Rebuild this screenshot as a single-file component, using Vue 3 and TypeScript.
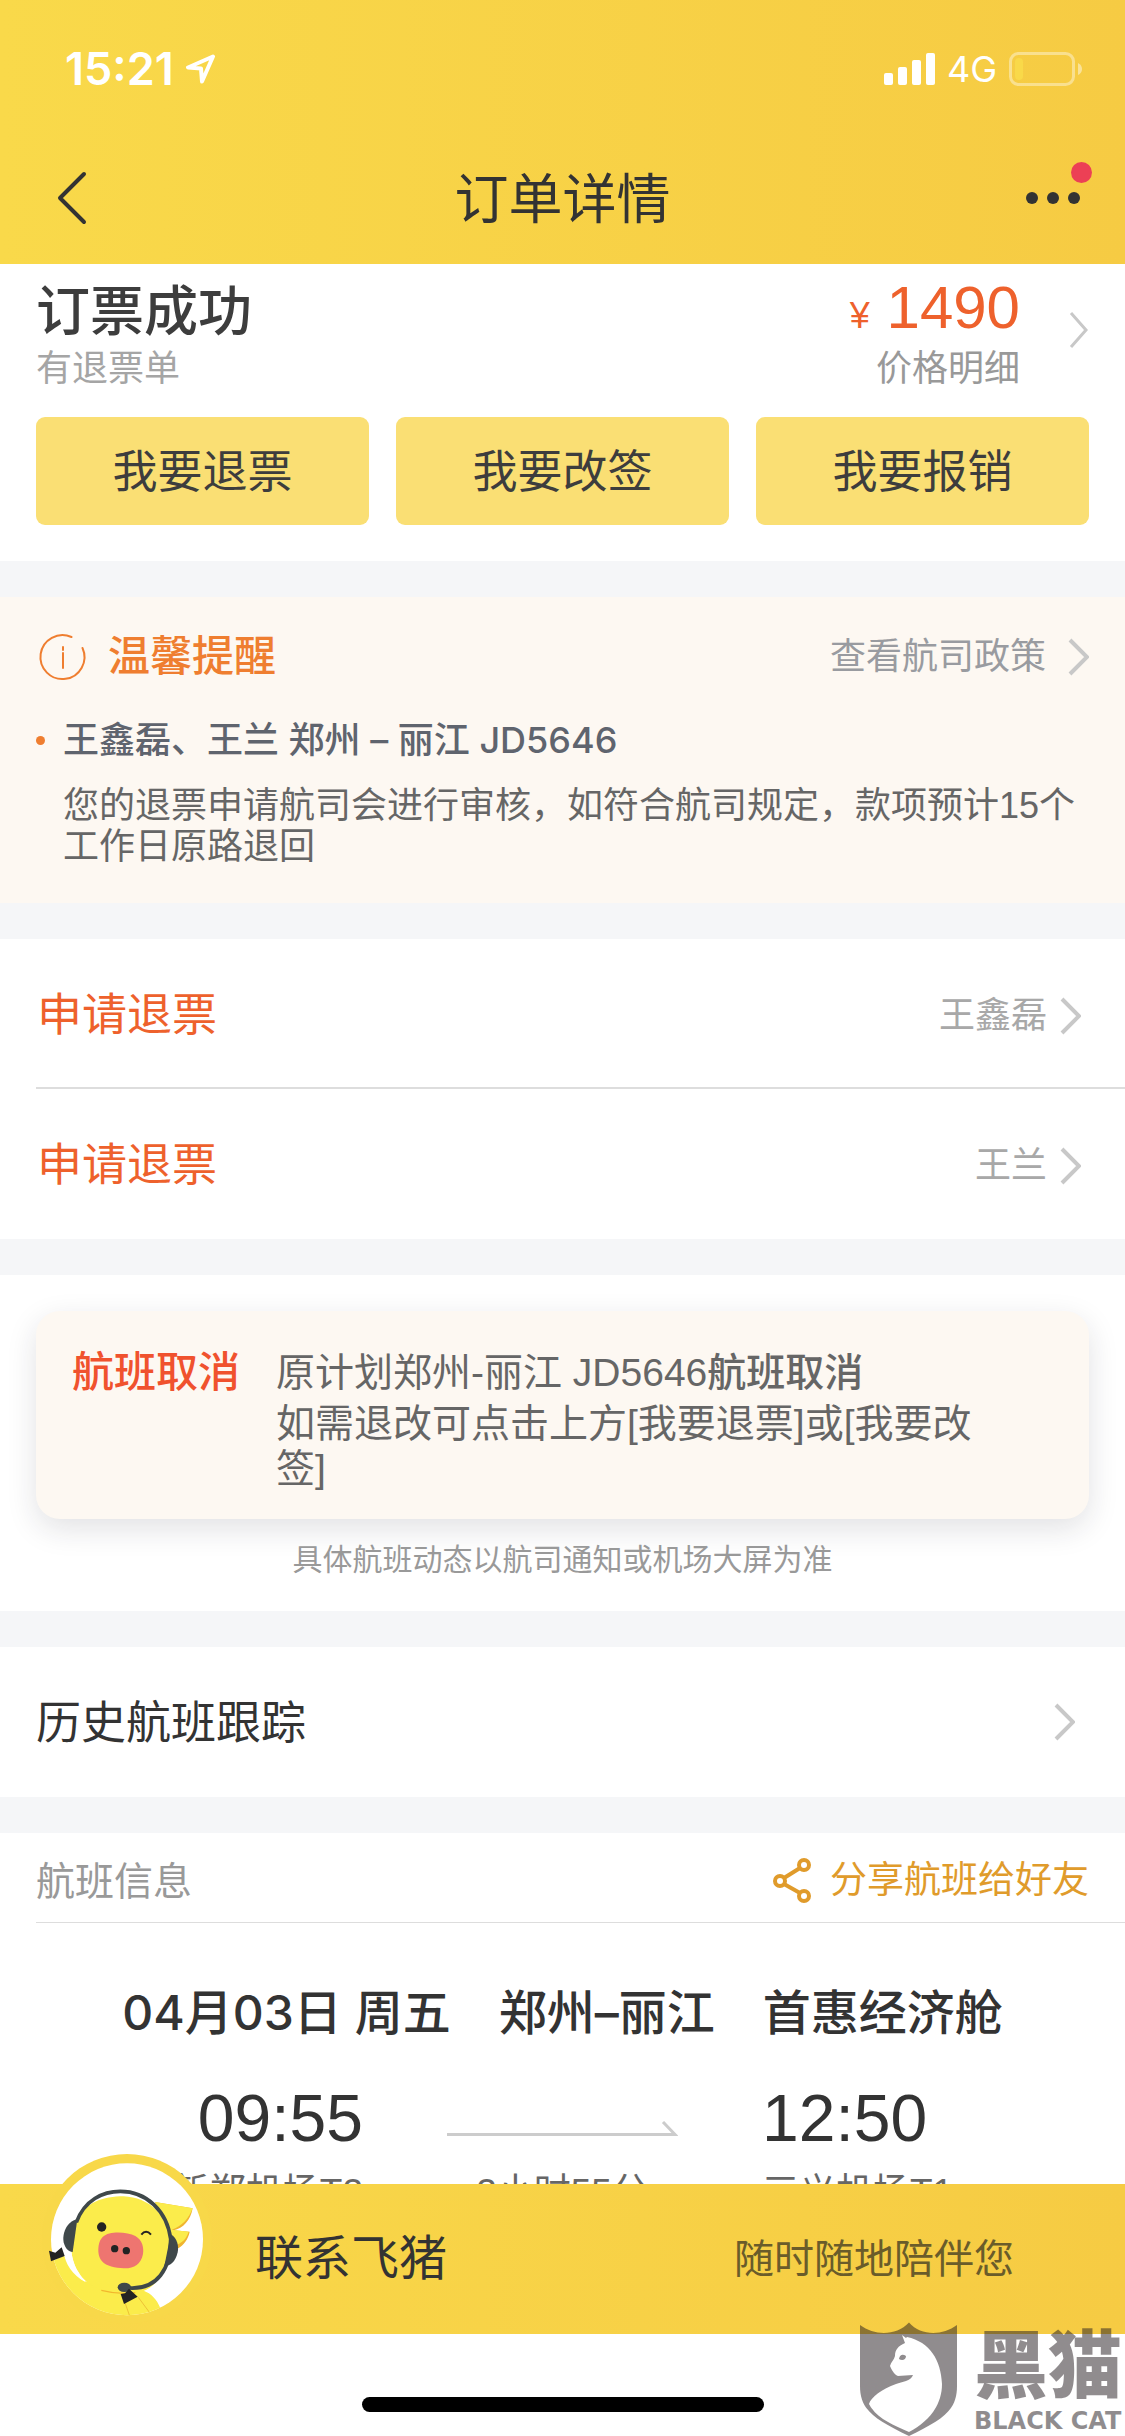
<script setup lang="ts">
interface RefundRow {
  id: number
  title: string
  passenger: string
}

const actions: string[] = ['我要退票', '我要改签', '我要报销']

const refunds: RefundRow[] = [
  { id: 1, title: '申请退票', passenger: '王鑫磊' },
  { id: 2, title: '申请退票', passenger: '王兰' },
]

const flight = {
  date: '04月03日 周五',
  route: '郑州–丽江',
  cabin: '首惠经济舱',
  depart: '09:55',
  arrive: '12:50',
  from: '新郑机场T2',
  to: '三义机场T1',
  duration: '2小时55分',
}
</script>

<template>
  <div class="page">
    <header class="top">
      <div class="status">
        <div class="status-left">
          <span class="clock">15:21</span>
          <svg class="locate" viewBox="0 0 30 30" aria-hidden="true">
            <path d="M27 2.500 L2 13.500 L15 14.500 L16 27.500 Z" />
          </svg>
        </div>
        <div class="status-right">
          <svg class="signal" viewBox="0 0 51 32" aria-hidden="true">
            <rect x="0" y="20" width="9" height="12" rx="2" />
            <rect x="14" y="14" width="9" height="18" rx="2" />
            <rect x="28" y="7" width="9" height="25" rx="2" />
            <rect x="42" y="0" width="9" height="32" rx="2" />
          </svg>
          <span class="network">4G</span>
          <svg class="battery" viewBox="0 0 74 34" aria-hidden="true">
            <rect x="1.500" y="1.500" width="63" height="31" rx="8" fill="none" stroke="#fff" stroke-opacity=".4" stroke-width="3" />
            <rect x="6" y="6" width="8" height="22" rx="4" fill="#f9d949" />
            <path d="M69 11 Q73 13 73 17 Q73 21 69 23 Z" fill="#fff" fill-opacity=".45" />
          </svg>
        </div>
      </div>
      <nav class="nav">
        <button class="icon-btn" type="button" aria-label="返回">
          <svg class="back" viewBox="0 0 30 54" aria-hidden="true">
            <path d="M27 3 L3 27 L27 51" />
          </svg>
        </button>
        <h1>订单详情</h1>
        <button class="icon-btn more" type="button" aria-label="更多">
          <svg class="dots" viewBox="0 0 54 12" aria-hidden="true">
            <circle cx="6" cy="6" r="6" />
            <circle cx="27" cy="6" r="6" />
            <circle cx="48" cy="6" r="6" />
          </svg>
          <span class="badge"></span>
        </button>
      </nav>
    </header>

    <main>
      <section class="order">
        <div class="summary">
          <div class="state">
            <h2>订票成功</h2>
            <p>有退票单</p>
          </div>
          <div class="price">
            <p class="amount"><small>¥</small> 1490</p>
            <p class="detail">价格明细</p>
          </div>
          <svg class="chev thin" viewBox="0 0 22 40" aria-hidden="true"><path d="M4 3 L19 20 L4 37" /></svg>
        </div>
        <div class="actions">
          <button v-for="label in actions" :key="label" type="button">{{ label }}</button>
        </div>
      </section>

      <section class="notice">
        <div class="notice-head">
          <svg class="info" viewBox="0 0 54 54" aria-hidden="true">
            <path d="M35.500 7 A22 22 0 1 0 46.500 18" />
            <path d="M27 17 V20 M27 23 V38" />
          </svg>
          <h3>温馨提醒</h3>
          <a href="#policy">查看航司政策
            <svg class="chev" viewBox="0 0 22 40" aria-hidden="true"><path d="M3 3 L20 20 L3 37" /></svg>
          </a>
        </div>
        <p class="who">王鑫磊、王兰 郑州 – 丽江 JD5646</p>
        <p class="body">您的退票申请航司会进行审核，如符合航司规定，款项预计15个工作日原路退回</p>
      </section>

      <section class="refunds">
        <a v-for="row in refunds" :key="row.id" class="refund" href="#refund">
          <span class="refund-title">{{ row.title }}</span>
          <span class="refund-name">{{ row.passenger }}</span>
          <svg class="chev" viewBox="0 0 22 40" aria-hidden="true"><path d="M3 3 L20 20 L3 37" /></svg>
        </a>
      </section>

      <section class="cancel">
        <div class="card">
          <h3>航班取消</h3>
          <div class="card-text">
            <p class="plan">原计划郑州-丽江 JD5646<b>航班取消</b></p>
            <p>如需退改可点击上方[我要退票]或[我要改签]</p>
          </div>
        </div>
        <p class="caption">具体航班动态以航司通知或机场大屏为准</p>
      </section>

      <a class="history" href="#history">
        <span>历史航班跟踪</span>
        <svg class="chev" viewBox="0 0 22 40" aria-hidden="true"><path d="M3 3 L20 20 L3 37" /></svg>
      </a>

      <section class="flight">
        <div class="flight-head">
          <h3>航班信息</h3>
          <a href="#share">
            <svg class="share" viewBox="0 0 39 45" aria-hidden="true">
              <circle cx="31" cy="7" r="5" />
              <circle cx="7" cy="23" r="5" />
              <circle cx="31" cy="38" r="5" />
              <path d="M27 10 L11 20 M11 26 L27 35" />
            </svg>
            分享航班给好友
          </a>
        </div>
        <div class="trip">
          <span>{{ flight.date }}</span>
          <span>{{ flight.route }}</span>
          <span>{{ flight.cabin }}</span>
        </div>
        <div class="schedule">
          <time class="start">{{ flight.depart }}</time>
          <svg class="arrow" viewBox="0 0 231 15" aria-hidden="true"><path d="M0 13.500 H228 L216 1" /></svg>
          <time>{{ flight.arrive }}</time>
          <span class="place start">{{ flight.from }}</span>
          <span class="place mid">{{ flight.duration }}</span>
          <span class="place">{{ flight.to }}</span>
        </div>
      </section>
    </main>

    <footer class="dock">
      <a class="contact" href="#service">
        <svg class="avatar" viewBox="125 70 510 510" aria-hidden="true">
          <defs>
            <clipPath id="face"><circle cx="380" cy="326" r="228" /></clipPath>
          </defs>
          <circle cx="380" cy="325" r="255" fill="#f8d849" />
          <circle cx="380" cy="326" r="228" fill="#fff" />
          <g clip-path="url(#face)">
            <path d="M464 214 L577 233 C571 268 548 294 520 299 L568 303 C563 328 550 342 534 353 L505 312 Z" fill="#f0b52f" />
            <path d="M464 214 L577 233 C566 262 545 288 514 297 L565 303 C558 324 548 334 530 342 L505 312 Z" fill="#fbec4b" />
            <path d="M140 400 L191 374 C207 410 228 436 252 452 L430 480 C452 488 470 506 480 532 L440 570 H250 L140 470 Z" fill="#fbec4b" />
            <path d="M228 275 C250 215 310 197 370 197 C445 200 506 255 510 330 C510 415 465 490 385 490 C320 490 260 470 235 425 C205 380 208 320 228 275 Z" fill="#fbec4b" />
            <path d="M190 362 C194 400 216 434 255 454 C232 428 219 402 213 364 Z" fill="#fff" />
            <path d="M303 479 Q352 492 405 486" fill="none" stroke="#f2b72e" stroke-width="4" />
            <path d="M374 516 L388 556 M414 500 L448 546" fill="none" stroke="#e5ab2c" stroke-width="2" />
          </g>
          <path d="M228 275 C252 208 308 182 360 182 C438 182 500 240 511 325 C512 415 470 478 385 472" fill="none" stroke="#3f484a" stroke-width="11" />
          <path d="M231 266 C197 273 185 312 190 335 C195 355 205 363 217 364 Z" fill="#3f484a" />
          <path d="M511 311 C531 322 536 347 532 365 C525 395 510 405 492 407 Z" fill="#3f484a" />
          <ellipse cx="372" cy="470" rx="20" ry="14" fill="#3f484a" />
          <circle cx="304" cy="289" r="14" fill="#232323" />
          <path d="M423 312 Q437 295 452 312" fill="none" stroke="#232323" stroke-width="6" />
          <path d="M340 306 C365 304 390 308 405 316 C426 328 431 350 428 370 C422 402 400 414 370 413 C345 412 318 407 305 392 C292 377 291 350 299 330 C307 314 322 307 340 306 Z" fill="#ee7570" />
          <circle cx="343" cy="354" r="11" fill="#232323" />
          <circle cx="378" cy="360" r="11" fill="#232323" />
          <path d="M146 360 L165 366 L184 350 L193 376 L152 392 Z" fill="#232323" />
          <path d="M361 490 L374 488 L386 474 L412 498 L371 520 Z" fill="#232323" />
        </svg>
        <strong>联系飞猪</strong>
        <span>随时随地陪伴您</span>
      </a>
      <div class="home"><span class="home-bar"></span></div>
      <div class="watermark">
        <svg class="shield" viewBox="0 0 97 114" aria-hidden="true">
          <path
            fill-rule="evenodd"
            d="M0 3 C15 14 36 14 49 0.500 C61 14 82 14 97 3 V64 C97 88 84 97 49 114 C14 97 0 88 0 64 Z
               M42 13 L45 21 C38 24 35 28 35 34 C34 38 31 40 30 44 C32 49 35 53 38 54 L53 53 C51 59 42 60 36 62 C22 67 11 75 9 82 C17 97 32 102 49 110 C68 100 82 84 82 62 C81 38 70 20 47 15 L46 16 Z
               M39 37 C40 32 43 32 46 34 C46 38 42 39 39 37 Z"
          />
        </svg>
        <div class="brand">
          <span class="brand-zh">黑猫</span>
          <span class="brand-en">BLACK CAT</span>
        </div>
      </div>
    </footer>
  </div>
</template>

<style>
body {
  margin: 0;
  background: #f5f6f8;
}
</style>

<style scoped>
.page {
  min-height: 100vh;
  background: #f5f6f8;
  color: #333;
  font-family: "Liberation Sans", "Noto Sans CJK SC", sans-serif;
  font-size: 36px;
  line-height: 48px;
}

h1, h2, h3, p {
  margin: 0;
  font-size: inherit;
  font-weight: inherit;
}

a {
  color: inherit;
  text-decoration: none;
}

button {
  border: 0;
  padding: 0;
  background: none;
  color: inherit;
  font: inherit;
}

svg {
  display: block;
  flex: none;
}

.top,
.contact {
  background: linear-gradient(90deg, #f9d94a, #f6cb43);
}

.status,
.nav {
  display: flex;
  align-items: center;
  justify-content: space-between;
  box-sizing: border-box;
  height: 132px;
}

.status {
  padding: 6px 42px 0 65px;
  color: #fff;
  font-family: Inter, sans-serif;
}

.status-left,
.status-right {
  display: flex;
  align-items: center;
  gap: 12px;
}

.clock {
  font-size: 45px;
  font-weight: 600;
}

.locate {
  width: 30px;
  height: 30px;
  fill: none;
  stroke: #fff;
  stroke-width: 4;
  stroke-linejoin: round;
}

.signal {
  width: 51px;
  height: 32px;
  fill: #fff;
}

.battery {
  width: 74px;
  height: 34px;
}

.nav {
  padding: 0 45px;
}

.nav h1 {
  padding-top: 3px;
  font-size: 54px;
  line-height: 60px;
}

.icon-btn {
  display: flex;
  position: relative;
  justify-content: center;
  width: 54px;
}

.back {
  width: 30px;
  height: 54px;
  fill: none;
  stroke: #333;
  stroke-width: 4;
  stroke-linecap: round;
  stroke-linejoin: round;
}

.dots {
  width: 54px;
  height: 12px;
  fill: #333;
}

.badge {
  position: absolute;
  top: -30px;
  right: -12px;
  width: 21px;
  height: 21px;
  border-radius: 50%;
  background: #ec4055;
}

.chev {
  width: 22px;
  height: 40px;
  fill: none;
  stroke: #c8c8c8;
  stroke-width: 4;
}

.chev.thin {
  stroke-width: 3;
}

.order {
  padding: 18px 36px 36px;
  background: #fff;
}

.summary {
  display: flex;
  align-items: center;
}

.state h2 {
  font-size: 54px;
  font-weight: 500;
  line-height: 60px;
  color: #3d3d3d;
}

.state p,
.detail {
  line-height: 54px;
  color: #a5a5a5;
}

.price {
  display: flex;
  flex-direction: column;
  gap: 8px;
  margin-left: auto;
  margin-right: 47px;
  text-align: right;
}

.amount {
  font-size: 60px;
  line-height: 52px;
  color: #ee612c;
}

.amount small {
  font-size: 36px;
  line-height: 36px;
}

.detail {
  color: #999;
}

.summary .chev {
  margin-bottom: 18px;
}

.actions {
  display: grid;
  grid-template-columns: repeat(3, 1fr);
  gap: 27px;
  margin-top: 21px;
}

.actions button {
  height: 108px;
  padding-top: 3px;
  border-radius: 9px;
  background: #fadf74;
  color: #3d3d3d;
  font-size: 45px;
}

.notice {
  margin-top: 36px;
  padding: 36px;
  background: #fdf8f2;
}

.notice-head {
  display: flex;
  align-items: center;
  height: 48px;
}

.info {
  width: 54px;
  height: 54px;
  fill: none;
  stroke: #ef7e30;
  stroke-width: 2;
  stroke-linecap: round;
}

.notice-head h3 {
  margin-left: 18px;
  color: #ef7e30;
  font-size: 42px;
  font-weight: 500;
}

.notice-head a {
  display: flex;
  align-items: center;
  gap: 21px;
  margin-left: auto;
  color: #999ba0;
}

.who {
  display: flex;
  align-items: center;
  gap: 18px;
  margin-top: 35px;
  color: #5f646e;
  font-family: Inter, "Noto Sans CJK SC", sans-serif;
  font-weight: 500;
}

.who::before {
  content: "";
  width: 9px;
  height: 9px;
  border-radius: 50%;
  background: #ef7e30;
}

.body {
  margin-top: 21px;
  padding-left: 27px;
  line-height: 41px;
  color: #666;
}

.refunds {
  margin-top: 36px;
  padding-left: 36px;
  background: #fff;
}

.refund {
  display: flex;
  align-items: center;
  box-sizing: border-box;
  height: 150px;
  padding: 3px 44px 0 1px;
}

.refund + .refund {
  box-shadow: 0 -2px 0 #ddd;
}

.refund-title {
  color: #ee612c;
  font-size: 45px;
}

.refund-name {
  margin-left: auto;
  margin-right: 12px;
  color: #a8a8a8;
}

.cancel {
  margin-top: 36px;
  padding: 36px 36px 30px;
  background: #fff;
}

.card {
  display: flex;
  gap: 36px;
  padding: 36px 84px 28px 36px;
  border-radius: 24px;
  background: #fdf8f2;
  box-shadow: 0 10px 30px rgba(30, 30, 50, 0.13);
}

.card h3 {
  flex: none;
  color: #f0522e;
  font-size: 42px;
  font-weight: 500;
  line-height: 51px;
}

.card-text {
  color: #666;
  font-size: 39px;
  line-height: 45px;
}

.card-text .plan {
  margin-bottom: 3px;
  line-height: 51px;
}

.card-text b {
  font-weight: 500;
}

.caption {
  margin-top: 20px;
  color: #999;
  font-size: 30px;
  line-height: 42px;
  text-align: center;
}

.history {
  display: flex;
  align-items: center;
  justify-content: space-between;
  height: 150px;
  margin-top: 36px;
  padding: 0 50px 0 36px;
  background: #fff;
  font-size: 45px;
}

.history span {
  padding-top: 3px;
}

.flight {
  margin-top: 36px;
  padding-bottom: 36px;
  background: #fff;
}

.flight-head {
  display: flex;
  align-items: center;
  justify-content: space-between;
  box-sizing: border-box;
  height: 90px;
  margin-left: 36px;
  padding: 6px 36px 0 0;
  border-bottom: 1px solid #ddd;
}

.flight-head h3 {
  padding-top: 3px;
  color: #999;
  font-size: 39px;
}

.flight-head a {
  display: flex;
  align-items: center;
  gap: 18px;
  color: #e09b2b;
  font-size: 37px;
}

.share {
  width: 39px;
  height: 45px;
  fill: none;
  stroke: #e09b2b;
  stroke-width: 4;
}

.trip {
  display: flex;
  justify-content: center;
  gap: 48px;
  margin-top: 60px;
  font-family: Inter, "Noto Sans CJK SC", sans-serif;
  font-size: 48px;
  font-weight: 500;
  line-height: 60px;
}

.schedule {
  display: grid;
  grid-template-columns: 1fr 231px 1fr;
  gap: 15px 84px;
  margin-top: 39px;
  padding: 0 36px;
}

.schedule time {
  font-size: 66px;
  line-height: 72px;
}

.schedule .start {
  text-align: right;
}

.arrow {
  align-self: end;
  width: 231px;
  height: 15px;
  margin-bottom: 18px;
  fill: none;
  stroke: #ccc;
  stroke-width: 3;
}

.place {
  color: #666;
  font-size: 37px;
}

.place.mid {
  text-align: center;
}

.dock {
  position: fixed;
  right: 0;
  bottom: 0;
  left: 0;
  background: #fff;
}

.contact {
  display: flex;
  position: relative;
  align-items: center;
  justify-content: space-between;
  height: 150px;
  padding: 0 111px 0 255px;
}

.avatar {
  position: absolute;
  top: -30px;
  left: 42px;
  width: 170px;
  height: 170px;
}

.contact strong {
  font-size: 48px;
  font-weight: 400;
}

.contact span {
  color: #6a5c2a;
  font-size: 40px;
}

.home {
  display: flex;
  justify-content: center;
  height: 39px;
  padding-top: 63px;
}

.home-bar {
  width: 402px;
  height: 15px;
  border-radius: 8px;
  background: #000;
}

.watermark {
  display: flex;
  position: absolute;
  right: 3px;
  bottom: 0;
  align-items: flex-end;
  gap: 17px;
  color: #231b1f;
  opacity: 0.5;
}

.shield {
  width: 97px;
  height: 114px;
  fill: currentColor;
}

.brand {
  display: flex;
  flex-direction: column;
  gap: 15px;
  padding-bottom: 3px;
}

.brand-zh {
  font-family: "Noto Sans CJK SC", sans-serif;
  font-size: 74px;
  font-weight: 900;
  line-height: 69px;
}

.brand-en {
  font-family: "DejaVu Sans", sans-serif;
  font-size: 24px;
  font-weight: 700;
  line-height: 24px;
}
</style>
